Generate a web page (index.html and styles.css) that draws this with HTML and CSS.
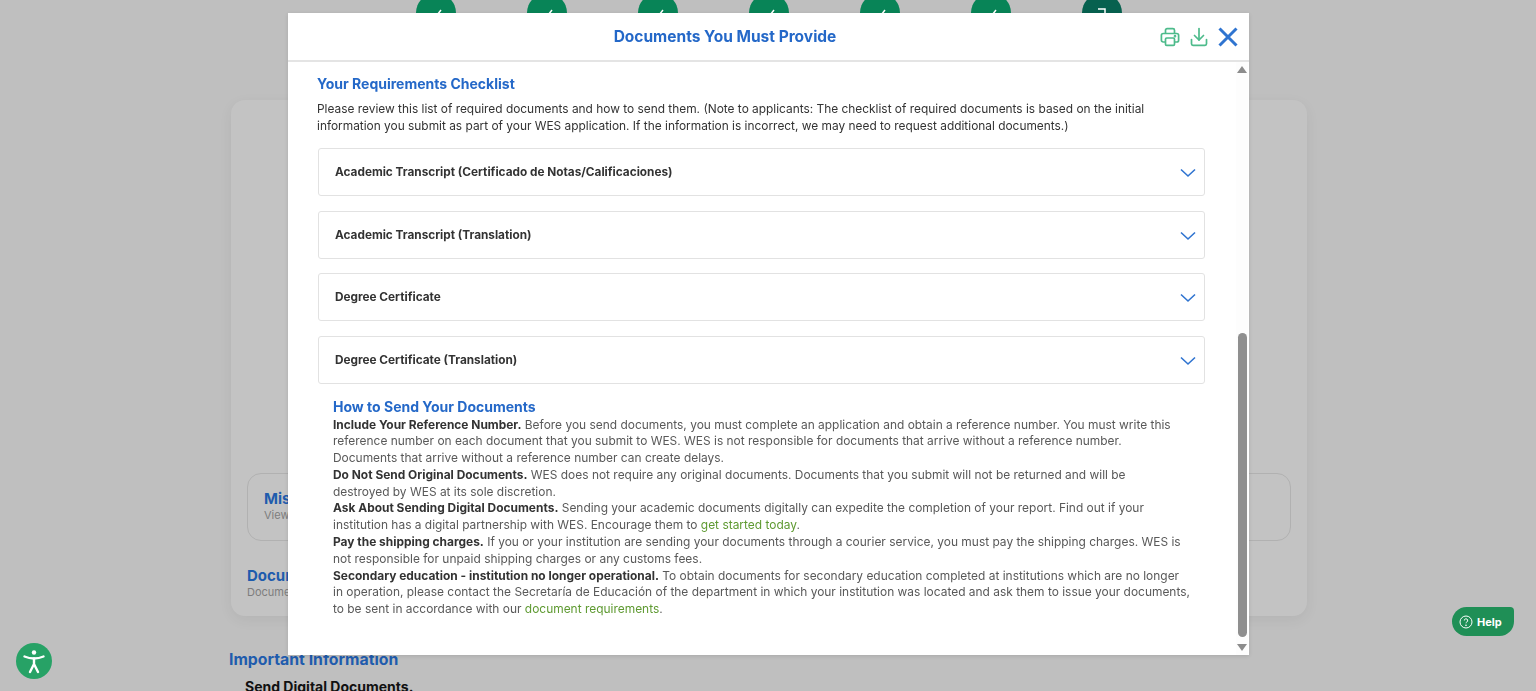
FILE: index.html
```html
<!DOCTYPE html>
<html lang="en">
<head>
<meta charset="utf-8">
<title>Documents You Must Provide</title>
<link rel="stylesheet" href="styles.css">
</head>
<body>
<div class="page">
  <div class="steps">
    <span class="step"><svg width="16" height="16" viewBox="0 0 16 16" fill="none" stroke="#fff" stroke-width="1.500"><path d="M3 10l3 3 7-9"/></svg></span>
    <span class="step"><svg width="16" height="16" viewBox="0 0 16 16" fill="none" stroke="#fff" stroke-width="1.500"><path d="M3 10l3 3 7-9"/></svg></span>
    <span class="step"><svg width="16" height="16" viewBox="0 0 16 16" fill="none" stroke="#fff" stroke-width="1.500"><path d="M3 10l3 3 7-9"/></svg></span>
    <span class="step"><svg width="16" height="16" viewBox="0 0 16 16" fill="none" stroke="#fff" stroke-width="1.500"><path d="M3 10l3 3 7-9"/></svg></span>
    <span class="step"><svg width="16" height="16" viewBox="0 0 16 16" fill="none" stroke="#fff" stroke-width="1.500"><path d="M3 10l3 3 7-9"/></svg></span>
    <span class="step"><svg width="16" height="16" viewBox="0 0 16 16" fill="none" stroke="#fff" stroke-width="1.500"><path d="M3 10l3 3 7-9"/></svg></span>
    <span class="step current"><svg width="16" height="16" viewBox="0 0 16 16" fill="none" stroke="#fff" stroke-width="1.500"><path d="M4 3h7v5M8 8l-2 6"/></svg></span>
  </div>
  <section class="card">
    <div class="missing"><strong>Missing Documents</strong><span>View documents</span></div>
    <div class="docs"><strong>Documents</strong><span>Documents you must provide</span></div>
  </section>
  <h2 class="important">Important Information</h2>
  <p class="send">Send Digital Documents.</p>
</div>

<div class="modal">
  <header class="modal-head">
    <h1>Documents You Must Provide</h1>
    <div class="tools">
      <svg class="ico" width="20" height="20" viewBox="0 0 20 20" fill="none" stroke="#4dbb8b" stroke-width="1.700" stroke-linejoin="round"><path d="M5.500 6.500V3.200a1.600 1.600 0 0 1 1.600-1.600h5.800a1.600 1.600 0 0 1 1.600 1.600v3.300"/><path d="M5.500 15H3.200a1.800 1.800 0 0 1-1.800-1.800V8.300a1.800 1.800 0 0 1 1.800-1.800h13.600a1.800 1.800 0 0 1 1.800 1.800v4.900a1.800 1.800 0 0 1-1.800 1.800H14.500"/><rect x="5.500" y="11" width="9" height="7.400" rx="1.200"/><circle cx="15" cy="9.200" r=".5" fill="#4dbb8b"/></svg>
      <svg class="ico" width="18" height="20" viewBox="0 0 18 20" fill="none" stroke="#4dbb8b" stroke-width="1.700" stroke-linecap="round" stroke-linejoin="round"><path d="M9 1.500V13"/><path d="M4.500 8.500 9 13l4.500-4.500"/><path d="M1.500 12.500v4.300a1.500 1.500 0 0 0 1.500 1.500h12a1.500 1.500 0 0 0 1.500-1.500v-4.300"/></svg>
      <svg class="ico" width="20" height="20" viewBox="0 0 20 20" fill="none" stroke="#2f74d0" stroke-width="3"><path d="M1.500 1.500 18.500 18.500M18.500 1.500 1.500 18.500"/></svg>
    </div>
  </header>
  <div class="modal-main">
    <div class="content">
      <h3>Your Requirements Checklist</h3>
      <p class="intro">Please review this list of required documents and how to send them. (Note to applicants: The checklist of required documents is based on the initial<br>information you submit as part of your WES application. If the information is incorrect, we may need to request additional documents.)</p>
      <div class="acc"><span>Academic Transcript (Certificado de Notas/Calificaciones)</span><svg width="16" height="10" viewBox="0 0 16 10" fill="none" stroke="#2f74d0" stroke-width="1.600"><path d="M1 1.500 8 8l7-6.500"/></svg></div>
      <div class="acc"><span>Academic Transcript (Translation)</span><svg width="16" height="10" viewBox="0 0 16 10" fill="none" stroke="#2f74d0" stroke-width="1.600"><path d="M1 1.500 8 8l7-6.500"/></svg></div>
      <div class="acc"><span>Degree Certificate</span><svg width="16" height="10" viewBox="0 0 16 10" fill="none" stroke="#2f74d0" stroke-width="1.600"><path d="M1 1.500 8 8l7-6.500"/></svg></div>
      <div class="acc"><span>Degree Certificate (Translation)</span><svg width="16" height="10" viewBox="0 0 16 10" fill="none" stroke="#2f74d0" stroke-width="1.600"><path d="M1 1.500 8 8l7-6.500"/></svg></div>
      <div class="how">
        <h3>How to Send Your Documents</h3>
        <p><b>Include Your Reference Number.</b> Before you send documents, you must complete an application and obtain a reference number. You must write this<br>reference number on each document that you submit to WES. WES is not responsible for documents that arrive without a reference number.<br>Documents that arrive without a reference number can create delays.</p>
        <p><b>Do Not Send Original Documents.</b> WES does not require any original documents. Documents that you submit will not be returned and will be<br>destroyed by WES at its sole discretion.</p>
        <p><b>Ask About Sending Digital Documents.</b> Sending your academic documents digitally can expedite the completion of your report. Find out if your<br>institution has a digital partnership with WES. Encourage them to <a>get started today</a>.</p>
        <p><b>Pay the shipping charges.</b> If you or your institution are sending your documents through a courier service, you must pay the shipping charges. WES is<br>not responsible for unpaid shipping charges or any customs fees.</p>
        <p><b>Secondary education - institution no longer operational.</b> To obtain documents for secondary education completed at institutions which are no longer<br>in operation, please contact the Secretaría de Educación of the department in which your institution was located and ask them to issue your documents,<br>to be sent in accordance with our <a>document requirements</a>.</p>
      </div>
    </div>
    <div class="scrollbar">
      <i class="arrow up"></i>
      <div class="track"><div class="thumb"></div></div>
      <i class="arrow down"></i>
    </div>
  </div>
</div>

<div class="a11y">
  <svg width="26" height="26" viewBox="0 0 26 26" fill="none" stroke="#fff" stroke-width="2.400" stroke-linecap="round" stroke-linejoin="round"><circle cx="13" cy="4.500" r="2.200" fill="#fff" stroke="none"/><path d="M3.500 8.500c3 1.300 6 2 9.500 2s6.500-.7 9.500-2"/><path d="M13 10.500v5.500M13 16l-4 8M13 16l4 8"/></svg>
</div>
<div class="help">
  <svg width="14" height="14" viewBox="0 0 14 14" fill="none" stroke="#fff" stroke-width="1"><circle cx="7" cy="7" r="6"/><path d="M5.300 5.500a1.700 1.700 0 1 1 2.500 1.500c-.6.300-.8.700-.8 1.300"/><circle cx="7" cy="10.200" r=".4" fill="#fff"/></svg>
  <span>Help</span>
</div>
</body>
</html>
```

FILE: styles.css
```css
* { box-sizing: border-box; }
html, body { margin: 0; height: 100%; overflow: hidden; }
body {
  background: #bfbfbf;
  font-family: Inter, "Liberation Sans", sans-serif;
  color: #333;
}
.page { height: 691px; overflow: hidden; padding-left: 229px; }
.steps {
  display: flex;
  gap: 71px;
  margin: -7px 0 0 187px;
  height: 40px;
}
.step { width: 40px; height: 40px; border-radius: 50%; background: #088457; flex: none; display: flex; align-items: center; justify-content: center; padding-top: 2px; }
.step.current { background: #07614f; }
.card {
  width: 1076px;
  height: 516px;
  margin: 67px 0 0 2px;
  background: #c3c3c3;
  border-radius: 14px;
  box-shadow: 0 4px 14px rgba(0,0,0,.06);
  padding: 373px 16px 0;
}
.missing {
  height: 68px;
  border: 1px solid #b1b1b1;
  border-radius: 14px;
  padding: 15px 16px;
  display: flex;
  flex-direction: column;
}
.missing strong { font-size: 15px; line-height: 20px; color: #1f5cad; }
.missing span { font-size: 11px; line-height: 13px; color: #7d7d7d; }
.docs { margin-top: 26px; display: flex; flex-direction: column; }
.docs strong { font-size: 15px; line-height: 18px; color: #1f5cad; }
.docs span { font-size: 11px; line-height: 15px; color: #7d7d7d; }
.important { margin: 34px 0 0; font-size: 15.800px; line-height: 20px; font-weight: 700; color: #1f5cad; }
.send { margin: 8px 0 0 16px; font-size: 14px; line-height: 18px; font-weight: 700; color: #111; }

.modal {
  position: fixed;
  left: 288px;
  top: 13px;
  width: 961px;
  height: 642px;
  background: #fff;
  box-shadow: 0 1px 4px rgba(0,0,0,.12);
  display: flex;
  flex-direction: column;
}
.modal-head {
  flex: none;
  height: 49px;
  border-bottom: 2px solid #e4e4e4;
  display: flex;
  align-items: center;
}
.modal-head h1 {
  flex: 1;
  margin: 0;
  text-align: center;
  font-size: 15.500px;
  font-weight: 700;
  color: #2468c8;
}
.tools { width: 89px; display: flex; align-items: center; gap: 10px; margin-left: -2px; }
.ico { flex: none; display: block; }
.modal-main { flex: 1; display: flex; min-height: 0; }
.content { flex: 1; padding: 13px 31px 0 29px; min-width: 0; }
h3 { margin: 0; font-size: 14px; line-height: 18px; font-weight: 700; color: #2468c8; }
.intro { margin: 7px 0 14px; font-size: 11.900px; line-height: 17px; color: #333; }
.acc {
  height: 48px;
  margin: 0 0 14.500px 1px;
  border: 1px solid #e2e2e2;
  border-radius: 3px;
  display: flex;
  align-items: center;
  justify-content: space-between;
  padding: 0 8px 0 16px;
  font-size: 11.800px;
  font-weight: 700;
  color: #333;
}
.acc svg { margin-top: 2px; }
.how { margin: 0 0 0 16px; }
.how h3 { line-height: 18px; margin: -.5px 0 1px; }
.how p { margin: 0; font-size: 11.950px; line-height: 16.800px; color: #595959; }
.how b { color: #333; font-weight: 700; }
.how a { color: #5f9a32; }
.scrollbar { width: 12px; margin-right: 1px; display: flex; flex-direction: column; align-items: center; padding-top: 4px; background: #fdfdfd; }
.arrow { flex: none; width: 0; height: 0; border-left: 5px solid transparent; border-right: 5px solid transparent; }
.arrow.up { border-bottom: 7px solid #8c8c8c; }
.arrow.down { border-top: 7px solid #8c8c8c; margin-bottom: 4px; }
.track { flex: 1; width: 100%; display: flex; flex-direction: column; justify-content: flex-end; padding: 0 1.500px 7px; }
.thumb { height: 304px; background: #8f8f8f; border-radius: 5px; }

.a11y {
  position: fixed;
  left: 16px;
  top: 643px;
  width: 36px;
  height: 36px;
  border-radius: 50%;
  background: #27a266;
  display: flex;
  align-items: center;
  justify-content: center;
}
.help {
  position: fixed;
  left: 1452px;
  top: 607px;
  width: 62px;
  height: 29px;
  background: #1f8f56;
  border-radius: 15px 4px 15px 15px;
  display: flex;
  align-items: center;
  gap: 4px;
  padding-left: 7px;
  color: #fff;
  font-size: 11px;
  font-weight: 700;
}
```
